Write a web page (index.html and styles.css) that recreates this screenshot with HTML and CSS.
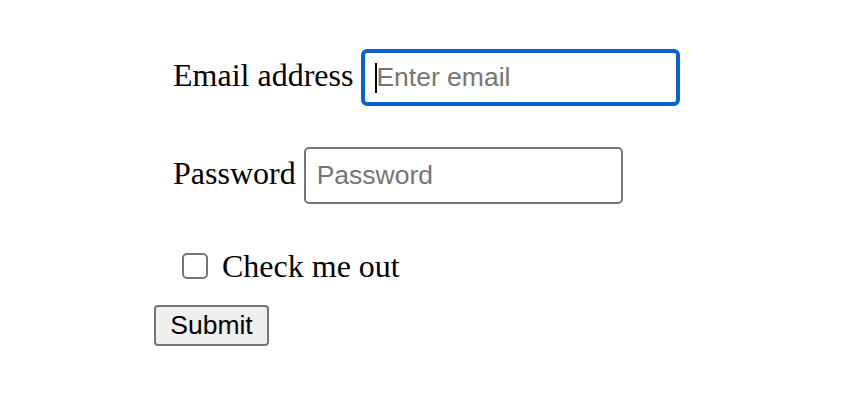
FILE: index.html
```html
<!DOCTYPE html>
<html>
<head>
<meta charset="utf-8">
<link rel="stylesheet" href="styles.css">
</head>
<body>
<form class="form">
  <div class="group group-email">
    <label class="label" for="email">Email address</label>
    <span class="field-wrap">
      <input class="input input-focus" id="email" type="email" placeholder="Enter email">
      <span class="caret"></span>
    </span>
  </div>
  <div class="group group-password">
    <label class="label" for="pw">Password</label>
    <input class="input" id="pw" type="password" placeholder="Password">
  </div>
  <div class="group group-check">
    <input class="check" id="chk" type="checkbox">
    <label class="label" for="chk">Check me out</label>
  </div>
  <button class="btn" type="button">Submit</button>
</form>
</body>
</html>
```

FILE: styles.css
```css
html, body {
  margin: 0;
  padding: 0;
  background: #ffffff;
}

body {
  font-family: "Liberation Serif", "Times New Roman", serif;
  color: #000000;
  width: 850px;
  height: 400px;
  overflow: hidden;
}

.form {
  padding-left: 154px;
  padding-top: 49px;
  display: flex;
  flex-direction: column;
  align-items: flex-start;
}

.group {
  display: flex;
  align-items: baseline;
  gap: 8px;
  padding-left: 19px;
}

.group-password {
  margin-top: 41px;
}

.label {
  font-size: 32px;
  line-height: 36px;
}

.field-wrap {
  position: relative;
  display: inline-flex;
}

.input {
  box-sizing: border-box;
  width: 319px;
  height: 57px;
  margin: 0;
  padding: 0 11px;
  border: 2px solid #767676;
  border-radius: 5px;
  background: #ffffff;
  font-family: "Liberation Sans", Arial, sans-serif;
  font-size: 26.5px;
  color: #000000;
  outline: none;
  caret-color: transparent;
}

.input::placeholder {
  color: #757575;
  opacity: 1;
}

.input-focus {
  border: 4px solid #0a62d2;
  border-radius: 6px;
}

.caret {
  position: absolute;
  left: 14px;
  top: 14px;
  width: 2px;
  height: 30px;
  background: #000000;
}

.group-check {
  margin-top: 44px;
  align-items: center;
  gap: 0;
}

.check {
  appearance: none;
  -webkit-appearance: none;
  box-sizing: border-box;
  width: 26px;
  height: 26px;
  margin: 0 14px 0 9px;
  border: 2px solid #767676;
  border-radius: 5px;
  background: #ffffff;
}

.btn {
  box-sizing: border-box;
  margin-top: 21px;
  width: 115px;
  height: 41px;
  padding: 0;
  border: 2px solid #767676;
  border-radius: 4px;
  background: #efefef;
  font-family: "Liberation Sans", Arial, sans-serif;
  font-size: 26.5px;
  color: #000000;
  text-align: center;
}
```
